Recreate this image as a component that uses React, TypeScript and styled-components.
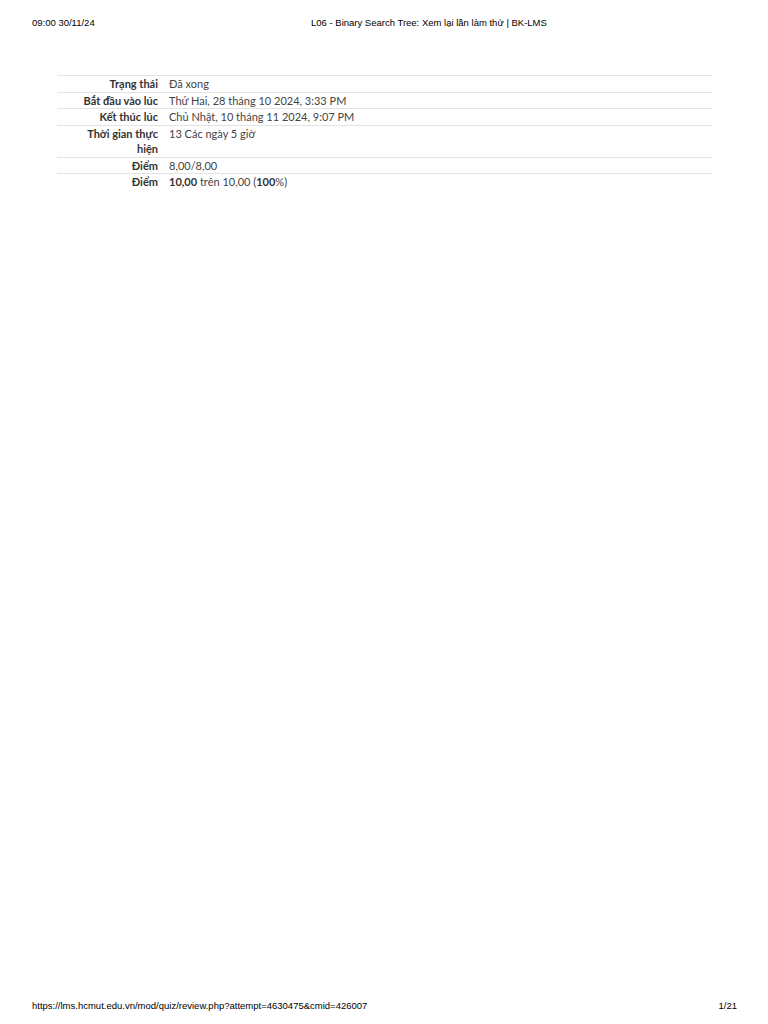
import React from "react";
import styled, { createGlobalStyle } from "styled-components";

const Global = createGlobalStyle`
  html, body { margin: 0; padding: 0; background: #fff; }
  body { width: 768px; height: 1024px; overflow: hidden; }
`;

const Page = styled.div`
  width: 768px;
  height: 1024px;
  display: flex;
  flex-direction: column;
  box-sizing: border-box;
  padding: 17px 31px 12px 32px;
  font-family: "Liberation Sans", Arial, sans-serif;
  color: #000;
`;

const PrintBar = styled.div`
  display: grid;
  grid-template-columns: 279px 1fr;
  font-size: 9.5px;
  line-height: 12px;
`;

const Content = styled.main`
  flex: 1;
  padding: 46px 24px 0 25px;
`;

const Table = styled.table`
  width: 655px;
  border-collapse: collapse;
  font-family: Lato, "Liberation Sans", sans-serif;
  font-size: 11px;
  line-height: 15.5px;
  border-top: 1.5px solid #e3e3e3;
`;

const Row = styled.tr`
  border-bottom: 1.5px solid #e3e3e3;
  &:last-child { border-bottom: none; }
`;

const Label = styled.th`
  width: 82px;
  text-align: right;
  vertical-align: top;
  font-weight: 700;
  color: #333;
  padding: 0 5px 0 19px;
`;

const Value = styled.td`
  vertical-align: top;
  color: #444;
  padding: 0 0 0 6px;
  b { font-weight: 700; color: #333; }
`;

const Footer = styled.div`
  display: flex;
  justify-content: space-between;
  font-size: 9.5px;
  line-height: 12px;
`;

const rows: { label: string; value: React.ReactNode }[] = [
  { label: "Trạng thái", value: "Đã xong" },
  { label: "Bắt đầu vào lúc", value: "Thứ Hai, 28 tháng 10 2024, 3:33 PM" },
  { label: "Kết thúc lúc", value: "Chủ Nhật, 10 tháng 11 2024, 9:07 PM" },
  { label: "Thời gian thực hiện", value: "13 Các ngày 5 giờ" },
  { label: "Điểm", value: "8,00/8,00" },
  {
    label: "Điểm",
    value: (
      <>
        <b>10,00</b> trên 10,00 (<b>100</b>%)
      </>
    ),
  },
];

export default function App() {
  return (
    <>
      <Global />
      <Page>
        <PrintBar>
          <span>09:00 30/11/24</span>
          <span>L06 - Binary Search Tree: Xem lại lần làm thử | BK-LMS</span>
        </PrintBar>
        <Content>
          <Table>
            <tbody>
              {rows.map((r, i) => (
                <Row key={i}>
                  <Label>{r.label}</Label>
                  <Value>{r.value}</Value>
                </Row>
              ))}
            </tbody>
          </Table>
        </Content>
        <Footer>
          <span>https://lms.hcmut.edu.vn/mod/quiz/review.php?attempt=4630475&amp;cmid=426007</span>
          <span>1/21</span>
        </Footer>
      </Page>
    </>
  );
}
